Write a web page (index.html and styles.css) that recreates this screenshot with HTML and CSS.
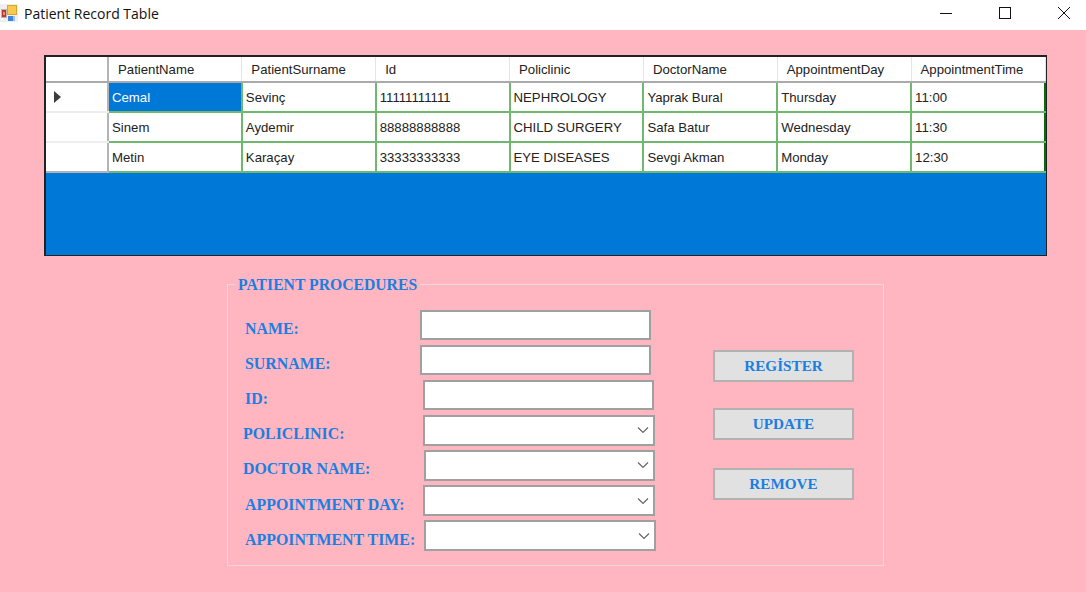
FILE: index.html
```html
<!DOCTYPE html>
<html lang="en">
<head>
    <meta charset="UTF-8">
    <title>Patient Record Table</title>
    <link rel="stylesheet" href="styles.css">
</head>
<body>
    <div class="titlebar">
        <svg class="app-icon" width="18" height="18" viewBox="0 0 18 18">
            <rect x="0" y="0" width="18" height="18" fill="#efefef"/>
            <rect x="1" y="13" width="2" height="3" fill="#fff"/>
            <rect x="1" y="5" width="6" height="9" fill="#b8b8b8"/>
            <rect x="2" y="6" width="4" height="7" fill="#c4352c"/>
            <rect x="3" y="8" width="2" height="3" fill="#e98a80"/>
            <rect x="7" y="1" width="10" height="10" fill="#d9a62a"/>
            <rect x="8" y="2" width="8" height="8" fill="#f8c94a"/>
            <rect x="8" y="12" width="7" height="5" fill="#3d82e0"/>
            <rect x="13" y="12" width="2" height="5" fill="#9cc2f0"/>
        </svg>
        <span class="title">Patient Record Table</span>
        <div class="window-buttons">
            <svg width="14" height="14" viewBox="0 0 14 14"><path d="M1 7.5H13" stroke="#111" fill="none"/></svg>
            <svg width="14" height="14" viewBox="0 0 14 14"><rect x="1.5" y="1.5" width="11" height="11" stroke="#111" fill="none"/></svg>
            <svg width="14" height="14" viewBox="0 0 14 14"><path d="M1 1L13 13M13 1L1 13" stroke="#111" fill="none"/></svg>
        </div>
    </div>

    <div class="window">
        <!-- Records grid -->
        <div class="grid-view">
            <table class="records">
                <thead>
                    <tr>
                        <th class="row-head"></th>
                        <th>PatientName</th>
                        <th>PatientSurname</th>
                        <th>Id</th>
                        <th>Policlinic</th>
                        <th>DoctorName</th>
                        <th>AppointmentDay</th>
                        <th>AppointmentTime</th>
                    </tr>
                </thead>
                <tbody>
                    <tr>
                        <td class="row-head"><span class="arrow"></span></td>
                        <td class="selected">Cemal</td>
                        <td>Sevinç</td>
                        <td>11111111111</td>
                        <td>NEPHROLOGY</td>
                        <td>Yaprak Bural</td>
                        <td>Thursday</td>
                        <td>11:00</td>
                    </tr>
                    <tr>
                        <td class="row-head"></td>
                        <td>Sinem</td>
                        <td>Aydemir</td>
                        <td>88888888888</td>
                        <td>CHILD SURGERY</td>
                        <td>Safa Batur</td>
                        <td>Wednesday</td>
                        <td>11:30</td>
                    </tr>
                    <tr>
                        <td class="row-head"></td>
                        <td>Metin</td>
                        <td>Karaçay</td>
                        <td>33333333333</td>
                        <td>EYE DISEASES</td>
                        <td>Sevgi Akman</td>
                        <td>Monday</td>
                        <td>12:30</td>
                    </tr>
                </tbody>
            </table>
        </div>

        <!-- Patient form -->
        <fieldset class="procedures">
            <legend>PATIENT PROCEDURES</legend>
            <div class="fields">
                <div class="field">
                    <label>NAME:</label>
                    <div class="box w-231 to-651"></div>
                </div>
                <div class="field">
                    <label>SURNAME:</label>
                    <div class="box w-231 to-651"></div>
                </div>
                <div class="field">
                    <label>ID:</label>
                    <div class="box w-231 to-654"></div>
                </div>
                <div class="field">
                    <label class="flush">POLICLINIC:</label>
                    <div class="box w-232 to-655 combo"><svg width="12" height="8" viewBox="0 0 12 8"><path d="M1 1.5L6 6.5L11 1.5" stroke="#666" stroke-width="1.2" fill="none"/></svg></div>
                </div>
                <div class="field">
                    <label class="flush">DOCTOR NAME:</label>
                    <div class="box w-231 to-655 combo"><svg width="12" height="8" viewBox="0 0 12 8"><path d="M1 1.5L6 6.5L11 1.5" stroke="#666" stroke-width="1.2" fill="none"/></svg></div>
                </div>
                <div class="field">
                    <label>APPOINTMENT DAY:</label>
                    <div class="box w-232 to-655 combo"><svg width="12" height="8" viewBox="0 0 12 8"><path d="M1 1.5L6 6.5L11 1.5" stroke="#666" stroke-width="1.2" fill="none"/></svg></div>
                </div>
                <div class="field">
                    <label>APPOINTMENT TIME:</label>
                    <div class="box w-232 to-656 combo"><svg width="12" height="8" viewBox="0 0 12 8"><path d="M1 1.5L6 6.5L11 1.5" stroke="#666" stroke-width="1.2" fill="none"/></svg></div>
                </div>
            </div>
            <div class="actions">
                <button>REGİSTER</button>
                <button>UPDATE</button>
                <button class="remove">REMOVE</button>
            </div>
        </fieldset>
    </div>
</body>
</html>
```

FILE: styles.css
```css
* {
    box-sizing: border-box;
}
html, body {
    margin: 0;
    height: 592px;
    overflow: hidden;
}
body {
    background-color: #ffb6c1;
}

/* Title bar */
.titlebar {
    display: flex;
    align-items: center;
    height: 30px;
    background: white;
}
.app-icon {
    margin-bottom: 4px;
}
.title {
    margin-left: 6px;
    margin-bottom: 3px;
    font-family: "Open Sans", sans-serif;
    font-size: 14px;
    color: #111;
}
.window-buttons {
    display: flex;
    gap: 45px;
    margin-left: auto;
    margin-right: 15px;
    margin-bottom: 4px;
}

/* Records grid */
.window {
    padding: 25px 39px 0 44px;
}
.grid-view {
    height: 201px;
    background-color: #0078d7;
    border: 2px solid #222;
    border-right-width: 1px;
    border-bottom-width: 1px;
}
.records {
    border-collapse: collapse;
    table-layout: fixed;
    width: 1000px;
    font-family: "Liberation Sans", sans-serif;
    font-size: 13.2px;
    color: #222;
}
.records th, .records td {
    padding: 0 0 0 3px;
    text-align: left;
    white-space: nowrap;
    overflow: hidden;
}
.records th {
    height: 25px;
    padding-left: 9px;
    font-weight: normal;
    background: white;
    border-right: 1px solid #e4e4e4;
    border-bottom: 2px solid #aaa;
}
.records td {
    height: 30px;
    background: white;
    border-right: 2px solid #6fb86f;
    border-bottom: 2px solid #6fb86f;
}
.records td:last-child {
    border-right-color: #0b6b0b;
}
.records th.row-head {
    width: 62px;
    border-right: 2px solid #b4b4b4;
}
.records td.row-head {
    padding-left: 8px;
    border-right: 2px solid #b4b4b4;
    border-bottom: 2px solid #eeeeee;
}
.records tr:last-child td.row-head {
    border-bottom-color: #b4b4b4;
}
.records td.selected {
    background-color: #0078d7;
    color: white;
}
.arrow {
    display: block;
    width: 0;
    height: 0;
    border-left: 7px solid #3c3c3c;
    border-top: 6px solid transparent;
    border-bottom: 6px solid transparent;
}

/* Patient form */
.procedures {
    display: flex;
    width: 657px;
    height: 292px;
    margin: 18px 0 0 183px;
    padding: 0 0 0 15px;
    border: 1.5px solid #ead8dc;
    font-family: "Liberation Serif", serif;
    font-weight: bold;
    color: #1a7fe0;
}
.procedures legend {
    margin-left: -8px;
    padding: 2px 3px 0;
    font-size: 15.7px;
}
.fields {
    display: flex;
    flex-direction: column;
    flex: none;
    width: 430px;
    margin-top: 13px;
}
.field {
    display: flex;
    flex: none;
    align-items: center;
    height: 35.2px;
    font-size: 15.9px;
}
.field label {
    margin-top: 8px;
    padding-left: 2px;
    white-space: nowrap;
}
.field label.flush {
    padding-left: 0;
}
.box {
    flex: none;
    height: 30px;
    background: white;
    border: 2px solid #a0a0a0;
}
.w-231 {
    width: 231px;
}
.w-232 {
    width: 232px;
}
/* boxes do not line up on the right edge in the form, each row ends where it ends */
.to-651 {
    margin-left: auto;
    margin-right: 22.5px;
}
.to-654 {
    margin-left: auto;
    margin-right: 19.5px;
}
.to-655 {
    margin-left: auto;
    margin-right: 18.5px;
}
.to-656 {
    margin-left: auto;
    margin-right: 17.5px;
}
.combo {
    display: flex;
    align-items: center;
    justify-content: flex-end;
    height: 31px;
    padding-right: 4px;
}
.actions {
    display: flex;
    flex-direction: column;
    margin: 56px 0 0 40px;
}
.actions button {
    width: 141px;
    height: 32px;
    margin-bottom: 26px;
    padding: 0;
    background-color: #e1e1e1;
    border: 2px solid #b2b2b2;
    font: inherit;
    font-size: 15.2px;
    color: #1a7fe0;
}
.actions .remove {
    margin-top: 2px;
}
```
